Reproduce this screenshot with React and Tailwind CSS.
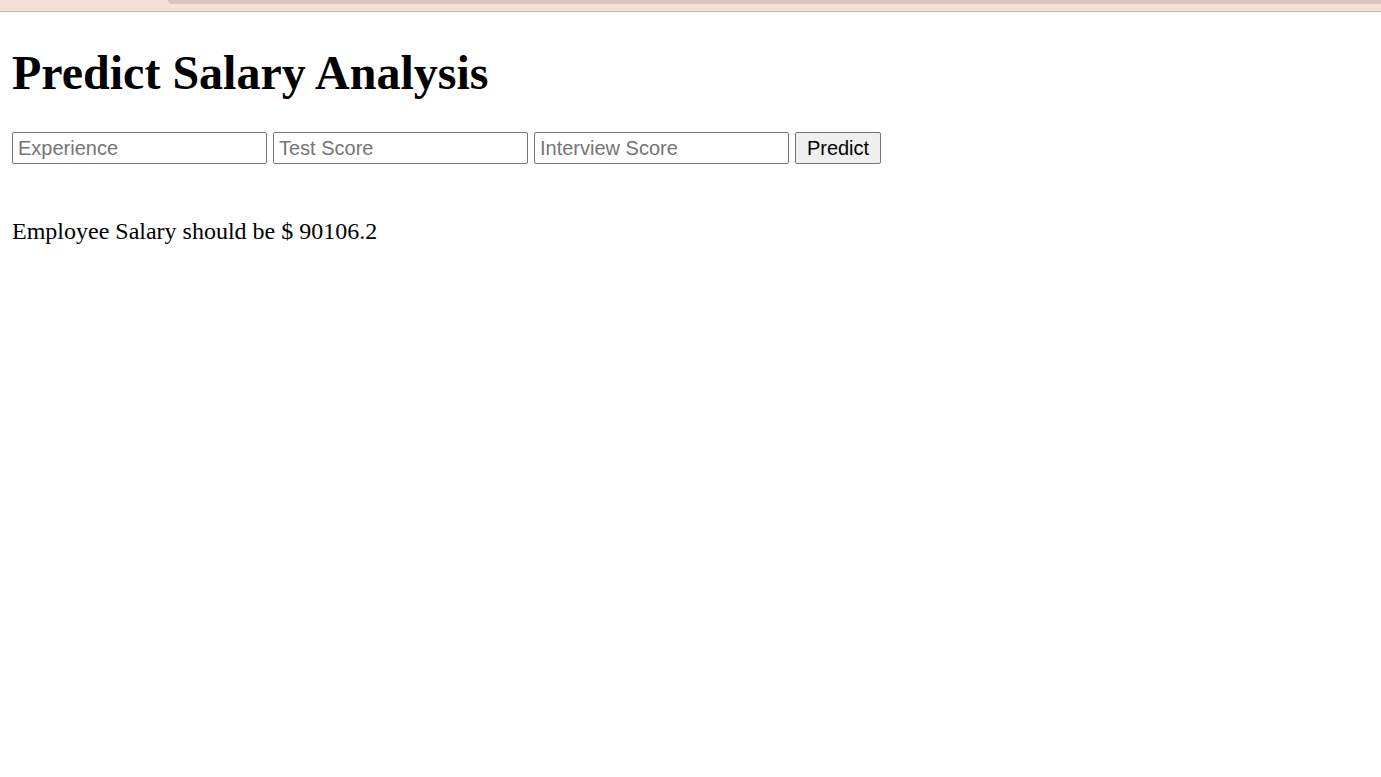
export default function App() {
  return (
    <div className="min-h-screen bg-white">
      <div className="relative h-[11px] bg-[#f6e0da] border-b border-[#cfb5b0] box-content">
        <div className="absolute left-[168px] right-0 top-0 h-[4px] bg-[#d9c4bd] rounded-bl-[10px]" />
      </div>
      <div className="px-[12px]">
        <h1 className="mt-[34px] text-[48px] leading-[53px] font-bold text-black" style={{ fontFamily: '"Liberation Serif", serif' }}>
          Predict Salary Analysis
        </h1>
        <form className="mt-[33px] flex gap-[6px]" onSubmit={(e) => e.preventDefault()} style={{ fontFamily: '"Liberation Sans", sans-serif' }}>
          <input placeholder="Experience" className="w-[255px] h-[32px] px-[5px] border border-[#767676] rounded-[2px] text-[20px] text-black placeholder:text-[#757575] outline-none" />
          <input placeholder="Test Score" className="w-[255px] h-[32px] px-[5px] border border-[#767676] rounded-[2px] text-[20px] text-black placeholder:text-[#757575] outline-none" />
          <input placeholder="Interview Score" className="w-[255px] h-[32px] px-[5px] border border-[#767676] rounded-[2px] text-[20px] text-black placeholder:text-[#757575] outline-none" />
          <button type="submit" className="w-[86px] h-[32px] border border-[#767676] rounded-[2px] bg-[#efefef] text-[20px] text-black">
            Predict
          </button>
        </form>
        <p className="mt-[54px] text-[24px] leading-[27px] text-black" style={{ fontFamily: '"Liberation Serif", serif' }}>
          Employee Salary should be $ 90106.2
        </p>
      </div>
    </div>
  );
}
